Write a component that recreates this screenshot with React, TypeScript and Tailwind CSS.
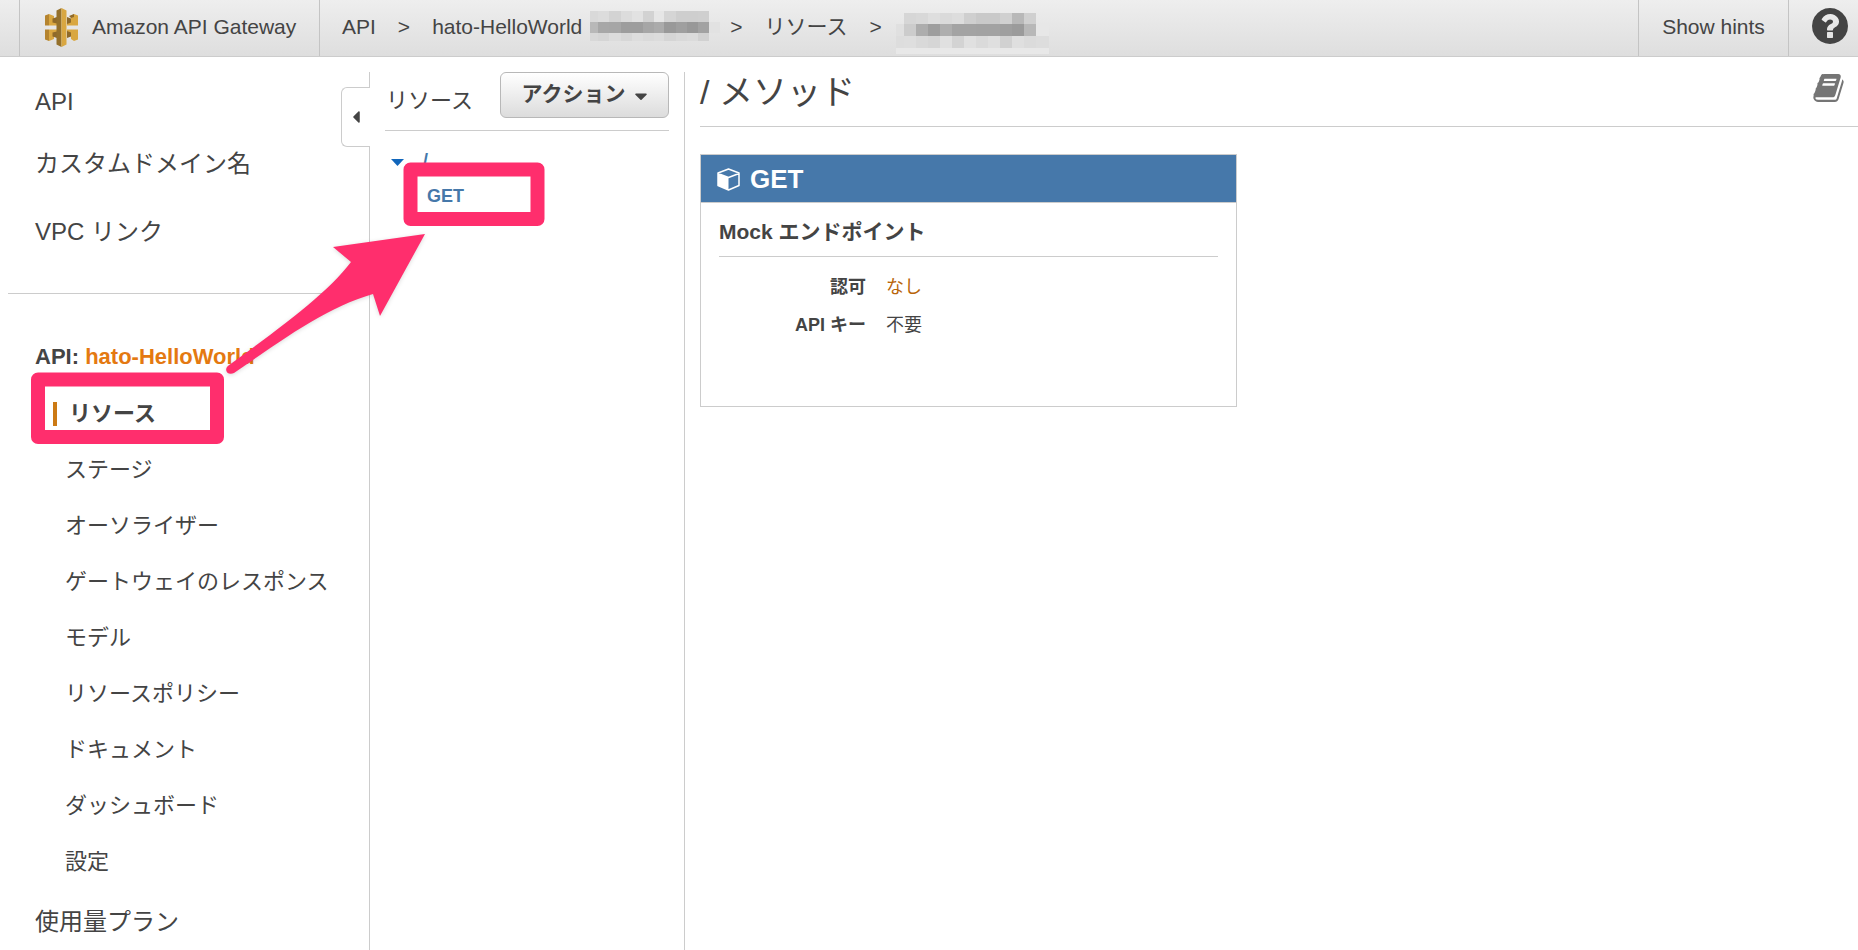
import { FaCaretDown, FaCaretLeft } from 'react-icons/fa';

const apiLinks = ['ステージ', 'オーソライザー', 'ゲートウェイのレスポンス', 'モデル', 'リソースポリシー', 'ドキュメント', 'ダッシュボード', '設定'];

type MaskRow = { y: number; h: number; colors: string[] };

const nameMask = {
  edges: [0, 8, 19, 31, 42, 53, 64, 74, 86, 97, 108, 119, 130],
  rows: [
    { y: 0, h: 11, colors: ['d9', 'dc', 'd3', 'dc', 'e2', 'd2', 'e6', 'd5', 'ce', 'ce', 'cf', ''] },
    { y: 11, h: 11, colors: ['b8', 'a7', 'a6', '9d', '9d', 'a6', 'ab', '99', '9f', '98', 'a2', 'e2'] },
    { y: 22, h: 8, colors: ['d8', 'd5', 'dc', 'd7', 'dd', 'da', 'dc', 'd5', 'd9', 'db', 'd1', ''] },
  ],
};

const idMask = {
  edges: [0, 8, 20, 32, 44, 56, 68, 80, 92, 104, 116, 128, 140, 153],
  rows: [
    { y: 0, h: 11, colors: ['', 'd6', 'd8', 'de', 'da', 'dd', 'cf', 'c9', 'c9', 'd0', 'b8', 'd0', ''] },
    { y: 11, h: 12, colors: ['e0', 'cc', 'ad', '9e', 'ae', 'a3', 'a3', 'a2', 'a2', '9f', '9b', 'b8', 'e7'] },
    { y: 23, h: 12, colors: ['dd', 'de', 'd9', 'd6', 'e0', 'd3', 'e0', 'da', 'df', 'd1', 'df', 'db', 'dd'] },
    { y: 35, h: 6, colors: ['e8', 'e8', 'e8', 'e8', 'e8', 'e8', 'e8', 'e8', 'e8', 'e8', 'e8', 'e8', 'e8'] },
  ],
};

const Mask = ({ edges, rows, className }: { edges: number[]; rows: MaskRow[]; className?: string }) => (
  <svg
    className={className}
    width={edges[edges.length - 1]}
    height={rows[rows.length - 1].y + rows[rows.length - 1].h}
    shapeRendering="crispEdges"
    aria-hidden="true"
  >
    {rows.map((row) =>
      row.colors.map((c, i) =>
        c ? <rect key={`${row.y}-${i}`} x={edges[i]} y={row.y} width={edges[i + 1] - edges[i]} height={row.h} fill={`#${c}${c}${c}`} /> : null
      )
    )}
  </svg>
);

const GatewayLogo = () => (
  <svg className="h-[39px] w-[33px] shrink-0" viewBox="0 0 33 39" aria-hidden="true">
    {/* arms */}
    <path fill="#b5842f" d="M0 7.500L4 6v11.500H0z M0 31.500L4 33V21.500H0z" />
    <path fill="#d9a741" d="M4 6l5 2v3.500h3v6H4z M4 33l5-2v-3.500h3v-6H4z" />
    <path fill="#8f6a2a" d="M7.500 10.500L12 9v6.500l-4.500-1z M7.500 28.500L12 30v-6.500l-4.500 1z" />
    <path fill="#d9a741" d="M29 6l4 1.500v10H22V14h4V8z M29 33l4-1.500v-10H22V25h4v6z" />
    <path fill="#8f6a2a" d="M22 9l4 1.500v4L22 16z M22 30l4-1.500v-4L22 23z M24 8l5-2v3l-3 1z" />
    {/* pillar */}
    <path fill="#94702b" d="M11.500 2.500L16.500 0v39l-5-2.500z" />
    <path fill="#d9a741" d="M16.500 0l5 2.500v34l-5 2.500z" />
  </svg>
);

const HelpIcon = () => (
  <svg className="size-9" viewBox="128 128 1536 1536" fill="currentColor" aria-hidden="true">
    <path d="M1024 1376v-192q0-14-9-23t-23-9h-192q-14 0-23 9t-9 23v192q0 14 9 23t23 9h192q14 0 23-9t9-23zm256-672q0-88-55.5-163t-138.5-116-170-41q-243 0-371 213-15 24 8 42l132 100q7 6 19 6 16 0 25-12 53-68 86-92 34-24 86-24 48 0 85.5 26t37.5 59q0 38-20 61t-68 45q-63 28-115.5 86.5t-52.5 125.5v36q0 14 9 23t23 9h192q14 0 23-9t9-23q0-19 21.5-49.5t54.5-49.5q32-18 49-28.5t46-35 44.5-48 28-60.5 12.5-81zm384 192q0 209-103 385.5t-279.5 279.5-385.5 103-385.5-103-279.5-279.5-103-385.5 103-385.5 279.5-279.5 385.5-103 385.5 103 279.5 279.5 103 385.5z" />
  </svg>
);

const BookIcon = () => (
  <svg className="h-7 w-[31px]" viewBox="0 128 1664 1536" fill="currentColor" aria-hidden="true">
    <path d="M1639 478q40 57 18 129l-275 906q-19 64-76.5 107.5t-122.5 43.5h-923q-77 0-148.5-53.5t-99.5-131.5q-24-67-2-127 0-4 3-27t4-37q1-8-3-21.5t-3-19.5q2-11 8-21t16.5-23.5 16.5-23.5q23-38 45-91.5t30-91.5q3-10 .5-30t-.5-28q3-11 17-28t17-23q21-36 42-92t25-90q1-9-2.5-32t.5-28q4-13 22-30.5t22-22.5q19-26 42.5-84.5t27.5-96.5q1-8-3-25.5t-2-26.5q2-8 9-18t18-23 17-21q8-12 16.5-30.5t15-35 16-36 19.5-32 26.5-23.5 36-11.5 47.5 5.5l-1 3q38-9 51-9h761q74 0 114 56t18 130l-274 906q-36 119-71.5 153.5t-128.5 34.5h-869q-27 0-38 15-11 16-1 43 24 70 144 70h923q29 0 56-15.5t35-41.5l300-987q7-22 5-57 38 15 59 43zm-1064 2q-4 13 2 22.5t20 9.5h608q13 0 25.5-9.5t16.5-22.5l21-64q4-13-2-22.5t-20-9.5h-608q-13 0-25.5 9.5t-16.5 22.5zm-83 256q-4 13 2 22.5t20 9.5h608q13 0 25.5-9.5t16.5-22.5l21-64q4-13-2-22.5t-20-9.5h-608q-13 0-25.5 9.5t-16.5 22.5z" />
  </svg>
);

const CubeIcon = () => (
  <svg className="h-[23px] w-[23px]" viewBox="0 0 23 23" aria-hidden="true">
    <path fill="none" stroke="#fff" strokeWidth="1.5" strokeLinejoin="round" d="M11.5 1L22 5v12.500L11.500 22L1 17.500V5z M1 5.500l10.500 4L22 5.500" />
    <path fill="#fff" d="M1 5.500L11.500 9.500V22L1 17.500z" />
  </svg>
);

const Header = () => (
  <header className="flex h-[57px] items-stretch border-b border-[#ccc] bg-linear-to-b from-[#eee] to-[#dedede] pl-[19px] text-[21px] leading-6">
    <a href="#home" className="flex w-[301px] items-center gap-[14px] border-x border-[#c4c4c4] pb-[2px] pl-[25px]">
      <GatewayLogo />
      Amazon API Gateway
    </a>
    <nav aria-label="Breadcrumb" className="flex flex-1 items-center gap-[22px] pb-[2px] pl-[22px] whitespace-nowrap">
      <a href="#apis">API</a>
      <span>&gt;</span>
      <a href="#api" className="flex items-center gap-2">
        hato-HelloWorld
        <Mask {...nameMask} className="mb-[2px]" />
      </a>
      <span className="-ml-3">&gt;</span>
      <a href="#resources">リソース</a>
      <span>&gt;</span>
      <Mask {...idMask} className="-mb-3 -ml-2" />
    </nav>
    <button type="button" className="w-[151px] border-x border-[#c4c4c4] pb-[2px]">
      Show hints
    </button>
    <button type="button" aria-label="Help" className="flex w-[69px] items-center justify-center pb-1 pl-3">
      <HelpIcon />
    </button>
  </header>
);

const Sidebar = () => (
  <nav aria-label="API Gateway" className="relative w-[370px] shrink-0 border-r border-[#ccc] text-2xl">
    <ul className="pt-[2px] pl-[35px]">
      <li><a href="#apis" className="block leading-[56px]">API</a></li>
      <li><a href="#domains" className="block leading-[68px]">カスタムドメイン名</a></li>
      <li><a href="#vpc-links" className="block leading-[68px]">VPC リンク</a></li>
    </ul>
    <hr className="mt-[27px] ml-2 border-[#ccc]" />
    <h2 className="mt-[35px] pl-[35px] text-[22px] leading-[56px] font-bold">
      API: <a href="#api" className="text-[#e47911]">hato-HelloWorld</a>
    </h2>
    <ul className="pt-px text-[22px] leading-[56px]">
      <li className="flex items-center pl-[53px]">
        <span className="h-6 w-1 bg-[#cc7a14]" />
        <a href="#resources" aria-current="page" className="pl-3 font-bold">リソース</a>
      </li>
      {apiLinks.map((label) => (
        <li key={label}>
          <a href={`#${label}`} className="block pl-[65px]">{label}</a>
        </li>
      ))}
    </ul>
    <a href="#usage-plans" className="mt-1 block pl-[35px] leading-[56px]">使用量プラン</a>
    <button
      type="button"
      aria-label="Collapse"
      className="absolute top-[15px] -right-px flex h-[60px] w-[29px] items-center justify-center rounded-l-md border border-r-0 border-[#ccc] bg-white"
    >
      <FaCaretLeft className="size-5" />
    </button>
  </nav>
);

const ResourceTree = () => (
  <section className="w-[315px] shrink-0 border-r border-[#ccc] px-[15px]">
    <div className="flex h-[59px] items-start justify-between border-b border-[#ccc]">
      <h2 className="pl-px text-[22px] leading-[58px]">リソース</h2>
      <button
        type="button"
        className="flex h-[46px] w-[169px] items-center justify-center gap-[6px] rounded-md border border-[#b8b8b8] bg-linear-to-b from-white to-[#dcdcdc] pb-[2px] pl-1 text-[21px] font-bold"
      >
        アクション
        <FaCaretDown className="mt-1 size-5" />
      </button>
    </div>
    <ul className="pt-[15px] text-lg leading-9 font-bold text-[#4678aa]">
      <li>
        <div className="flex h-8 items-center">
          <svg className="ml-[6px] h-[7px] w-[13px]" viewBox="0 0 13 7" aria-hidden="true">
            <path fill="#1166bb" d="M0 0h13L6.500 7z" />
          </svg>
          <a href="#root" className="self-start pl-[19px] leading-7">/</a>
        </div>
        <a href="#get" className="block pl-[42px]">GET</a>
      </li>
    </ul>
  </section>
);

const MethodCard = () => (
  <article className="mt-[27px] min-h-[253px] w-full max-w-[537px] border border-[#ccc]">
    <h2 className="flex h-12 items-center gap-[10px] border-b border-[#ccc] bg-[#4678aa] pt-[2px] pl-4 text-[26px] font-bold text-white">
      <CubeIcon />
      GET
    </h2>
    <div className="px-[18px]">
      <h3 className="border-b border-[#ccc] pt-[5px] text-[21px] leading-12 font-bold">Mock エンドポイント</h3>
      <table className="mt-[11px] text-lg leading-[38px]">
        <tbody>
          <tr>
            <th className="w-[147px] text-right">認可</th>
            <td className="pl-5 text-[#b8650a]">なし</td>
          </tr>
          <tr>
            <th className="text-right">API キー</th>
            <td className="pl-5">不要</td>
          </tr>
        </tbody>
      </table>
    </div>
  </article>
);

// Callouts drawn on top of the console
const Callouts = () => (
  <svg className="pointer-events-none absolute top-0 left-0" width="600" height="480" aria-hidden="true">
    <g fill="none" stroke="#ff2e6d" strokeWidth="14" strokeLinejoin="round">
      <path d="M38 379.500H217V437H38z" />
      <path d="M410.500 169.500H537.500V219H410.500z" />
    </g>
    <path
      fill="#ff2e6d"
      className="drop-shadow-sm"
      d="M425 234L333 247L351 262C328 293 276 331 228.500 365.500C223 370 228 376 234 373C282 340 327 307 373 294L380 316Z"
    />
  </svg>
);

export default function App() {
  return (
    <div className="relative flex min-h-screen flex-col bg-white font-['Liberation_Sans','Noto_Sans_CJK_JP',sans-serif] text-[#444]">
      <Header />
      <div className="flex flex-1 pt-[15px]">
        <Sidebar />
        <ResourceTree />
        <main className="min-w-0 flex-1 pl-[15px]">
          <div className="flex h-[55px] items-start justify-between border-b border-[#ccc] pr-[14px]">
            <h1 className="text-[34px] leading-10">/ メソッド</h1>
            <button type="button" aria-label="Documentation" className="pt-[2px] text-[#757575]">
              <BookIcon />
            </button>
          </div>
          <MethodCard />
        </main>
      </div>
      <Callouts />
    </div>
  );
}
